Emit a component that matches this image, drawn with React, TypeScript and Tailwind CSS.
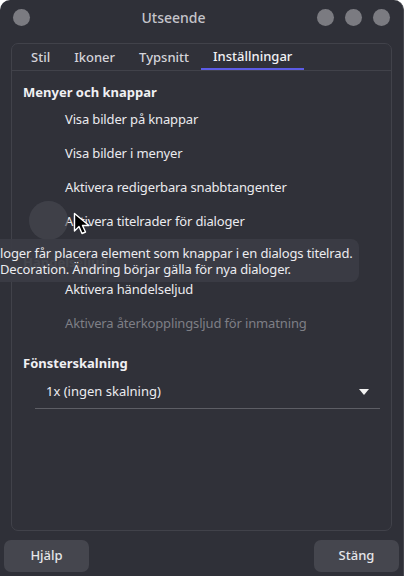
import React from "react";

const font = { fontFamily: '"Noto Sans", "Open Sans", sans-serif' };

function Dot() {
  return <div className="w-[17px] h-[17px] rounded-full bg-[#7b7b81]" />;
}

function Item({ label, dim }: { label: string; dim?: boolean }) {
  return (
    <div className={`h-[34px] flex items-center pl-[53px] text-[13px] tracking-[-0.15px] ${dim ? "text-[#7e7f86]" : "text-[#ebebef]"}`}>
      {label}
    </div>
  );
}

function Heading({ label }: { label: string }) {
  return <div className="h-[20px] flex items-center pl-[11px] text-[13px] font-bold text-[#f0f0f3]">{label}</div>;
}

export default function App() {
  const tabs = ["Stil", "Ikoner", "Typsnitt", "Inställningar"];
  return (
    <div style={font} className="relative w-[404px] h-[576px] overflow-hidden bg-[#2f3038] rounded-t-[10px] border-r border-[#45464d] flex flex-col">
      {/* title bar */}
      <div className="h-[43px] flex items-start justify-between px-[13px] pt-[9px] shrink-0">
        <Dot />
        <div className="text-[14px] leading-[17px] text-[#c4c4ca] font-medium">Utseende</div>
        <div className="flex gap-[11px]">
          <Dot />
          <Dot />
          <Dot />
        </div>
      </div>

      {/* notebook */}
      <div className="mx-[11px] h-[488px] rounded-[7px] border border-[#41424a] bg-[#303139] flex flex-col">
        <div className="h-[27px] border-b border-[#41424a] flex items-stretch pl-[7px] text-[13px] text-[#d4d4da] shrink-0">
          {tabs.map((t, i) => (
            <div
              key={t}
              className={`px-[12px] pt-[1px] flex items-center ${i === 3 ? "border-b-2 border-[#5c5ce6] text-[#f2f2f5] font-medium" : "font-medium"}`}
            >
              {t}
            </div>
          ))}
        </div>
        <div className="pt-[12px] flex flex-col">
          <Heading label="Menyer och knappar" />
          <Item label="Visa bilder på knappar" />
          <Item label="Visa bilder i menyer" />
          <Item label="Aktivera redigerbara snabbtangenter" />
          <Item label="Aktivera titelrader för dialoger" />
          <div className="h-[14px]" />
          <Heading label="Händelseljud" />
          <Item label="Aktivera händelseljud" />
          <Item label="Aktivera återkopplingsljud för inmatning" dim />
          <div className="h-[13px]" />
          <Heading label="Fönsterskalning" />
          <div className="ml-[23px] mr-[11px] mt-[1px] h-[34px] border-b border-[#5d5e65] flex items-center justify-between pl-[11px] pr-[11px] text-[13px] text-[#ececf0]">
            <span>1x (ingen skalning)</span>
            <svg width="10" height="6" viewBox="0 0 10 6"><path d="M0 0h10L5 6z" fill="#f2f2f2" /></svg>
          </div>
        </div>
      </div>

      {/* footer buttons */}
      <div className="flex justify-between px-[4px] pt-[9px]">
        <button className="w-[85px] h-[32px] rounded-[7px] bg-[#45464e] text-[13px] font-medium text-[#e6e6ea]">Hjälp</button>
        <button className="w-[85px] h-[32px] rounded-[7px] bg-[#45464e] text-[13px] font-medium text-[#e6e6ea]">Stäng</button>
      </div>

      {/* click highlight + cursor */}
      <div className="absolute left-[29px] top-[201px] w-[39px] h-[39px] rounded-full bg-[#4a4b53]/60" />
      <svg className="absolute left-[73px] top-[212px]" width="20" height="24" viewBox="0 0 20 24">
        <path d="M1.5 1.5 L1.5 19 L6 14.5 L9 21.5 L12.5 20 L9.5 13.5 L16 13.5 Z" fill="#000" stroke="#fff" strokeWidth="1.4" strokeLinejoin="round" />
      </svg>

      {/* tooltip */}
      <div className="absolute left-[-10px] top-[239px] w-[369px] h-[43px] rounded-[8px] bg-[#3b3c44]/95 flex flex-col justify-center pl-[10px] pt-[1px] text-[13px] leading-[16px] tracking-[-0.15px] text-[#ececf0] whitespace-nowrap">
        <div>loger får placera element som knappar i en dialogs titelrad.</div>
        <div>Decoration. Ändring börjar gälla för nya dialoger.</div>
      </div>
    </div>
  );
}
